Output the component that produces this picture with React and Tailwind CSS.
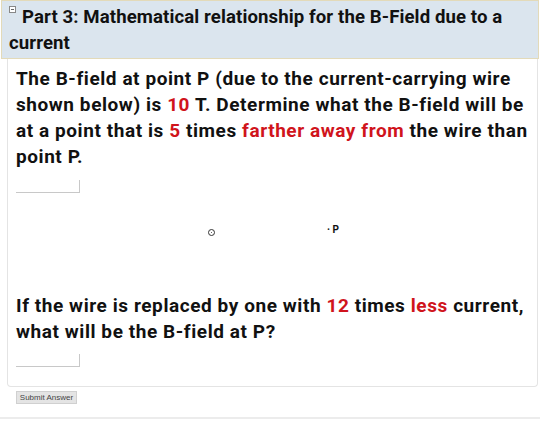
export default function App() {
  const red = "text-[#d0141c]";
  return (
    <div className="w-[540px] h-[421px] bg-white relative overflow-hidden flex flex-col" style={{ fontFamily: "Roboto, 'Liberation Sans', sans-serif" }}>
      <div className="mx-[1px] bg-[#dbe5ee] border border-[#e3dab9] h-[59px] pl-[7px] pr-2 pt-[3px] text-[18.6px] tracking-[0.1px] leading-[26px] font-bold text-[#111]">
        <span className="inline-block w-[7px] h-[7px] border border-[#888] bg-white relative -top-[9px] mr-[6px] align-middle">
          <span className="absolute left-[1px] right-[1px] top-[2px] h-[1px] bg-[#666]"></span>
        </span>
        Part 3: Mathematical relationship for the B-Field due to a current
      </div>
      <div className="ml-[7px] mr-[2px] border border-t-0 border-[#e4e4e4] h-[328px] pl-[8px] pr-[2px] pt-[7px] rounded-b-sm flex flex-col">
        <p className="text-[19px] tracking-[0.57px] leading-[26px] font-bold text-[#111]">
          The B-field at point P (due to the current-carrying wire shown below) is <span className={red}>10</span> T. Determine what the B-field will be at a point that is <span className={red}>5</span> times <span className={red}>farther away from</span> the wire than point P.
        </p>
        <div className="mt-[10px] w-[64px] h-[13px] border-b border-r border-[#c8c8c8]"></div>
        <div className="h-[100px] relative">
          <span className="absolute left-[192px] top-[36px] w-[7px] h-[7px] rounded-full border border-[#333] flex items-center justify-center">
            <span className="w-[1px] h-[1px] bg-[#333] rounded-full"></span>
          </span>
          <span className="absolute left-[311px] top-[31px] text-[10px] leading-[12px] font-bold text-[#111]">· P</span>
        </div>
        <p className="text-[19px] tracking-[0.57px] leading-[26px] font-bold text-[#111]">
          If the wire is replaced by one with <span className={red}>12</span> times <span className={red}>less</span> current, what will be the B-field at P?
        </p>
        <div className="mt-[9px] w-[64px] h-[13px] border-b border-r border-[#c8c8c8]"></div>
      </div>
      <div className="ml-[16px] mt-[4px] w-[61px] h-[13px] bg-[#e4e4e4] border border-[#d0d0d0] text-[8px] leading-[11px] text-[#444] text-center" style={{ fontFamily: "'Liberation Sans', Arial, sans-serif" }}>
        Submit Answer
      </div>
      <div className="mt-auto mb-[2px] h-[2px] bg-[#ececec]"></div>
    </div>
  );
}
